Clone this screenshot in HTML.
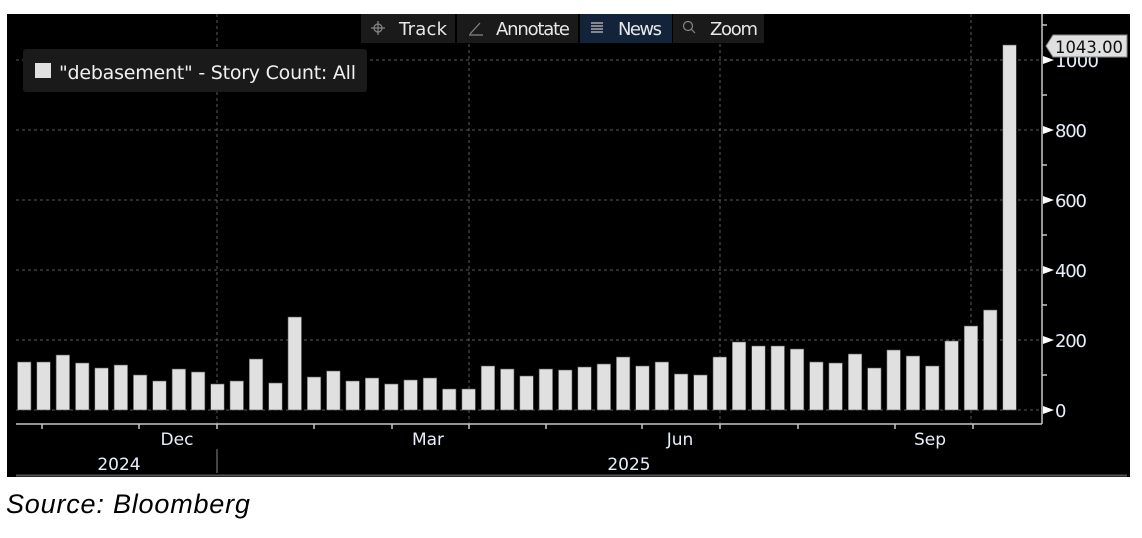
<!DOCTYPE html>
<html><head><meta charset="utf-8"><style>
html,body{margin:0;padding:0;background:#fff;width:1142px;height:538px;overflow:hidden}
svg{position:absolute;left:0;top:0}
.src{position:absolute;left:6px;top:489px;font:italic 27px "Liberation Sans",sans-serif;letter-spacing:0.8px;color:#000}
</style></head><body>
<svg width="1142" height="538" xmlns="http://www.w3.org/2000/svg" font-family="'DejaVu Sans','Liberation Sans',sans-serif">
<rect x="7" y="14" width="1123" height="463" fill="#000"/>
<g stroke="#5a5a5a" stroke-width="1" stroke-dasharray="3,3">
<line x1="16" y1="60" x2="1042" y2="60"/><line x1="16" y1="130" x2="1042" y2="130"/>
<line x1="16" y1="200" x2="1042" y2="200"/><line x1="16" y1="270" x2="1042" y2="270"/>
<line x1="16" y1="340" x2="1042" y2="340"/><line x1="16" y1="410" x2="1042" y2="410"/>
<line x1="217" y1="14" x2="217" y2="423"/><line x1="469" y1="14" x2="469" y2="423"/>
<line x1="720" y1="14" x2="720" y2="423"/><line x1="971" y1="14" x2="971" y2="423"/>
</g>
<g fill="#e0e0e0" stroke="#555" stroke-width="0.6">
<rect x="17.5" y="362" width="13.5" height="48"/><rect x="36.8" y="362" width="13.5" height="48"/>
<rect x="56.1" y="355" width="13.5" height="55"/><rect x="75.5" y="363" width="13.5" height="47"/>
<rect x="94.8" y="368" width="13.5" height="42"/><rect x="114.1" y="365" width="13.5" height="45"/>
<rect x="133.4" y="375" width="13.5" height="35"/><rect x="152.7" y="381" width="13.5" height="29"/>
<rect x="172.1" y="369" width="13.5" height="41"/><rect x="191.4" y="372" width="13.5" height="38"/>
<rect x="210.7" y="384" width="13.5" height="26"/><rect x="230" y="381" width="13.5" height="29"/>
<rect x="249.3" y="359" width="13.5" height="51"/><rect x="268.7" y="383" width="13.5" height="27"/>
<rect x="288" y="317" width="13.5" height="93"/><rect x="307.3" y="377" width="13.5" height="33"/>
<rect x="326.6" y="371" width="13.5" height="39"/><rect x="345.9" y="381" width="13.5" height="29"/>
<rect x="365.3" y="378" width="13.5" height="32"/><rect x="384.6" y="384" width="13.5" height="26"/>
<rect x="403.9" y="380" width="13.5" height="30"/><rect x="423.2" y="378" width="13.5" height="32"/>
<rect x="442.5" y="389" width="13.5" height="21"/><rect x="461.9" y="389" width="13.5" height="21"/>
<rect x="481.2" y="366" width="13.5" height="44"/><rect x="500.5" y="369" width="13.5" height="41"/>
<rect x="519.8" y="376" width="13.5" height="34"/><rect x="539.1" y="369" width="13.5" height="41"/>
<rect x="558.5" y="370" width="13.5" height="40"/><rect x="577.8" y="367" width="13.5" height="43"/>
<rect x="597.1" y="364" width="13.5" height="46"/><rect x="616.4" y="357" width="13.5" height="53"/>
<rect x="635.7" y="366" width="13.5" height="44"/><rect x="655.1" y="362" width="13.5" height="48"/>
<rect x="674.4" y="374" width="13.5" height="36"/><rect x="693.7" y="375" width="13.5" height="35"/>
<rect x="713" y="357" width="13.5" height="53"/><rect x="732.3" y="342" width="13.5" height="68"/>
<rect x="751.7" y="346" width="13.5" height="64"/><rect x="771" y="346" width="13.5" height="64"/>
<rect x="790.3" y="349" width="13.5" height="61"/><rect x="809.6" y="362" width="13.5" height="48"/>
<rect x="828.9" y="363" width="13.5" height="47"/><rect x="848.3" y="354" width="13.5" height="56"/>
<rect x="867.6" y="368" width="13.5" height="42"/><rect x="886.9" y="350" width="13.5" height="60"/>
<rect x="906.2" y="356" width="13.5" height="54"/><rect x="925.5" y="366" width="13.5" height="44"/>
<rect x="944.9" y="341" width="13.5" height="69"/><rect x="964.2" y="326" width="13.5" height="84"/>
<rect x="983.5" y="310" width="13.5" height="100"/><rect x="1002.8" y="45" width="13.5" height="365"/>
</g>
<g stroke="#c8c8c8" stroke-width="1.5">
<line x1="1042" y1="14" x2="1042" y2="424"/>
<line x1="16" y1="424" x2="1042" y2="424"/>
<line x1="42" y1="424" x2="42" y2="429"/><line x1="139" y1="424" x2="139" y2="429"/>
<line x1="217" y1="424" x2="217" y2="429"/><line x1="314" y1="424" x2="314" y2="429"/>
<line x1="392" y1="424" x2="392" y2="429"/><line x1="469" y1="424" x2="469" y2="429"/>
<line x1="546" y1="424" x2="546" y2="429"/><line x1="642" y1="424" x2="642" y2="429"/>
<line x1="720" y1="424" x2="720" y2="429"/><line x1="798" y1="424" x2="798" y2="429"/>
<line x1="895" y1="424" x2="895" y2="429"/><line x1="973" y1="424" x2="973" y2="429"/>
<line x1="1042" y1="25" x2="1047" y2="25"/><line x1="1042" y1="95" x2="1047" y2="95"/>
<line x1="1042" y1="165" x2="1047" y2="165"/><line x1="1042" y1="235" x2="1047" y2="235"/>
<line x1="1042" y1="305" x2="1047" y2="305"/><line x1="1042" y1="375" x2="1047" y2="375"/>
</g>
<line x1="217" y1="449" x2="217" y2="473" stroke="#888" stroke-width="1"/>
<line x1="16" y1="475.5" x2="1127" y2="475.5" stroke="#555" stroke-width="2"/>
<g fill="#fff">
<path d="M1043 56 L1054 60 L1043 64Z"/><path d="M1043 126 L1054 130 L1043 134Z"/>
<path d="M1043 196 L1054 200 L1043 204Z"/><path d="M1043 266 L1054 270 L1043 274Z"/>
<path d="M1043 336 L1054 340 L1043 344Z"/><path d="M1043 406 L1054 410 L1043 414Z"/>
</g>
<g fill="#e8eefa" font-size="18">
<text x="1055" y="67" textLength="44">1000</text><text x="1055" y="137" textLength="32">800</text>
<text x="1055" y="207" textLength="32">600</text><text x="1055" y="277" textLength="32">400</text>
<text x="1055" y="347" textLength="32">200</text><text x="1055" y="417">0</text>
</g>
<path d="M1053 35 L1127 35 L1127 57 L1053 57 L1046 46Z" fill="#e0e0e0" stroke="#888"/>
<text x="1055" y="53" font-size="17" fill="#111" textLength="68" lengthAdjust="spacingAndGlyphs">1043.00</text>
<g fill="#e8eefa" font-size="17" text-anchor="middle">
<text x="177" y="445">Dec</text><text x="428" y="445">Mar</text>
<text x="680" y="445">Jun</text><text x="930" y="445">Sep</text>
<text x="119" y="470">2024</text><text x="629" y="470">2025</text>
</g>
<rect x="23" y="49" width="344" height="43" rx="3" fill="#1a1a1a"/>
<rect x="35" y="63" width="16" height="15" fill="#e0e0e0"/>
<text x="59" y="79" font-size="19" fill="#f0f0f0" textLength="297">"debasement" - Story Count: All</text>
<rect x="361" y="14" width="94" height="29" fill="#1a1a1a"/>
<rect x="457" y="14" width="121" height="29" fill="#1a1a1a"/>
<rect x="580" y="14" width="92" height="29" fill="#13243a"/>
<rect x="673" y="14" width="91" height="29" fill="#1a1a1a"/>
<g stroke="#888" fill="none" stroke-width="1.2">
<circle cx="378" cy="28" r="4"/><line x1="371" y1="28" x2="385" y2="28"/><line x1="378" y1="21" x2="378" y2="35"/>
<path d="M469 35 L483 35 M470 34 L480 23"/>
<circle cx="688" cy="26" r="4.5"/><line x1="691" y1="29" x2="695" y2="33"/>
</g>
<g stroke="#aaa" stroke-width="1.5"><line x1="591" y1="23" x2="603" y2="23"/><line x1="591" y1="26" x2="603" y2="26"/><line x1="591" y1="29" x2="603" y2="29"/><line x1="591" y1="32" x2="603" y2="32"/></g>
<g font-size="18" fill="#e8e8e8">
<text x="399" y="35" textLength="48">Track</text><text x="496" y="35" textLength="74">Annotate</text>
<text x="618" y="35" textLength="44">News</text><text x="710" y="35" textLength="48">Zoom</text>
</g>
</svg>
<div class="src">Source: Bloomberg</div>
</body></html>
